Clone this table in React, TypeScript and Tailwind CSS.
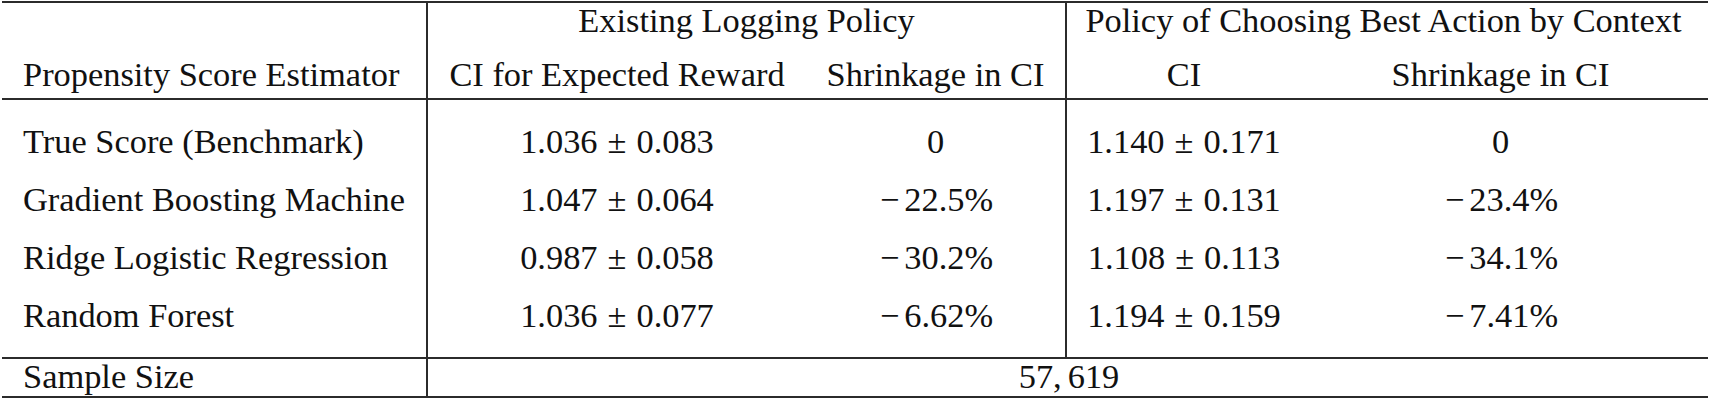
const rows = [
  { name: "True Score (Benchmark)", ci1: ["1.036", "0.083"], s1: "0", ci2: ["1.140", "0.171"], s2: "0" },
  { name: "Gradient Boosting Machine", ci1: ["1.047", "0.064"], s1: "−22.5%", ci2: ["1.197", "0.131"], s2: "−23.4%" },
  { name: "Ridge Logistic Regression", ci1: ["0.987", "0.058"], s1: "−30.2%", ci2: ["1.108", "0.113"], s2: "−34.1%" },
  { name: "Random Forest", ci1: ["1.036", "0.077"], s1: "−6.62%", ci2: ["1.194", "0.159"], s2: "−7.41%" },
];

const cols = "grid grid-cols-[428px_378px_261px_234px_409px]";
const vline = "border-r-2 border-[#2b2b2b]";

function Rule() {
  return <div className="mx-[2px] h-[2px] bg-[#2b2b2b]" />;
}

function PlusMinus({ v }: { v: string[] }) {
  return (
    <span>
      {v[0]}
      <span className="mx-[10px]">±</span>
      {v[1]}
    </span>
  );
}

function Pct({ s }: { s: string }) {
  if (!s.startsWith("−")) return <span>{s}</span>;
  return (
    <span>
      <span className="ml-[2px] mr-[5px]">−</span>
      {s.slice(1)}
    </span>
  );
}

export default function App() {
  return (
    <div className="w-[1710px] h-[401px] bg-white text-[#111] [font-family:Liberation_Serif,serif] text-[34.4px] pt-[1px] whitespace-nowrap">
      <Rule />

      {/* header */}
      <div className={`${cols} h-[34px] leading-[34px]`}>
        <div className={vline} />
        <div className={`col-span-2 text-center ${vline}`}>Existing Logging Policy</div>
        <div className="col-span-2 text-center pr-[10px]">Policy of Choosing Best Action by Context</div>
      </div>
      <div className={`${cols} h-[61px] pt-[17px] leading-[40px]`}>
        <div className={`pl-[23px] ${vline} -mt-[17px] pt-[17px]`}>Propensity Score Estimator</div>
        <div className="text-center">CI for Expected Reward</div>
        <div className={`text-center ${vline} -mt-[17px] pt-[17px]`}>Shrinkage in CI</div>
        <div className="text-center">CI</div>
        <div className="text-center pr-[10px]">Shrinkage in CI</div>
      </div>
      <Rule />

      {/* body */}
      {rows.map((r, i) => {
        const pad = i === 0 ? "h-[70px] pt-[12px]" : i === rows.length - 1 ? "h-[71px] pb-[13px]" : "h-[58px]";
        const edge = `${i === 0 ? "-mt-[12px] pt-[12px]" : ""} ${i === rows.length - 1 ? "-mb-[13px] pb-[13px]" : ""}`;
        return (
          <div key={r.name} className={`${cols} ${pad} leading-[58px]`}>
            <div className={`pl-[23px] ${vline} ${edge}`}>{r.name}</div>
            <div className="text-center">
              <PlusMinus v={r.ci1} />
            </div>
            <div className={`text-center ${vline} ${edge}`}>
              <Pct s={r.s1} />
            </div>
            <div className="text-center">
              <PlusMinus v={r.ci2} />
            </div>
            <div className="text-center pr-[10px]">
              <Pct s={r.s2} />
            </div>
          </div>
        );
      })}
      <Rule />

      {/* sample size */}
      <div className={`${cols} h-[37px] leading-[34px]`}>
        <div className={`pl-[23px] ${vline}`}>Sample Size</div>
        <div className="col-span-4 text-center">
          57,<span className="ml-[6px]">619</span>
        </div>
      </div>
      <Rule />
    </div>
  );
}
